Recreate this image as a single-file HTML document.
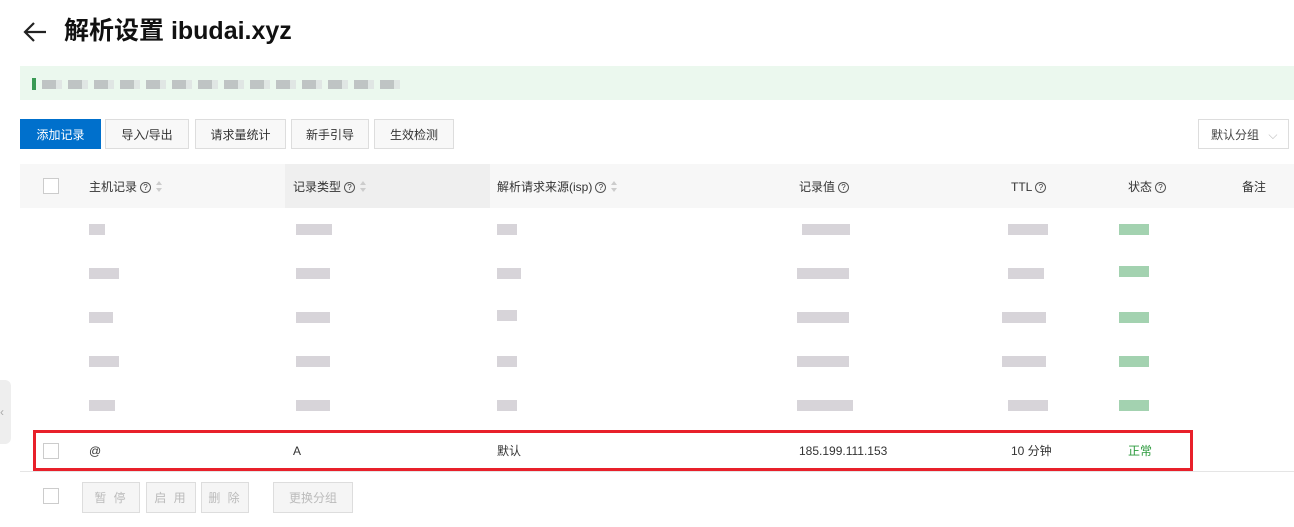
<!DOCTYPE html>
<html><head><meta charset="utf-8"><style>
body{margin:0;width:1294px;height:527px;background:#fff;font-family:"Liberation Sans","Noto Sans CJK SC",sans-serif;position:relative;overflow:hidden;color:#333}
.a{position:absolute}
.t{font-size:12px;color:#333;line-height:14px}
.btn{position:absolute;top:119px;height:30px;border:1px solid #ddd;background:#f8f8f8;font-size:12px;line-height:30px;text-align:center;color:#333;box-sizing:border-box}
.cb{position:absolute;width:14px;height:14px;border:1px solid #ccc;background:#fff}
.q{display:inline-block;width:9px;height:9px;border:1px solid #555;border-radius:50%;font-size:8px;line-height:9px;text-align:center;vertical-align:1px;margin-left:3px}
.s{display:inline-block;width:7px;height:14px;vertical-align:-3px;margin-left:5px;position:relative}
.s:before{content:"";position:absolute;left:0;top:1px;border:3.5px solid transparent;border-bottom:4px solid #ccc;border-top:0}
.s:after{content:"";position:absolute;left:0;top:8px;border:3.5px solid transparent;border-top:4px solid #ccc;border-bottom:0}
.b{position:absolute;height:11px;background:#c9c6cc;opacity:.75}
.g{position:absolute;height:11px;background:#8cc79c;opacity:.8}
.bb{position:absolute;top:482px;height:31px;border:1px solid #ddd;background:#f5f5f5;color:#bbb;font-size:12px;line-height:30px;text-align:center;box-sizing:border-box;letter-spacing:2px}
</style></head><body>
<svg class="a" style="left:22px;top:21px" width="26" height="22" viewBox="0 0 26 22"><path d="M24 11H3M12 2L3 11l9 9" fill="none" stroke="#222" stroke-width="2.2"/></svg>
<div class="a" style="left:64px;top:14px;font-size:25px;font-weight:bold;color:#111;line-height:34px">解析设置 ibudai.xyz</div>
<div class="a" style="left:20px;top:66px;width:1274px;height:34px;background:#ebf8ee"></div>
<div class="a" style="left:32px;top:78px;width:4px;height:12px;background:#3a9a55"></div>
<div class="a" style="left:42px;top:80px;width:360px;height:9px;background:repeating-linear-gradient(90deg,#bfc4c4 0 14px,#e0e6e4 14px 20px,#ebf8ee 20px 26px)"></div>
<div class="btn" style="left:20px;width:81px;background:#0070cc;border-color:#0070cc;color:#fff">添加记录</div>
<div class="btn" style="left:105px;width:84px">导入/导出</div>
<div class="btn" style="left:195px;width:91px">请求量统计</div>
<div class="btn" style="left:291px;width:78px">新手引导</div>
<div class="btn" style="left:374px;width:80px">生效检测</div>
<div class="btn" style="left:1198px;width:91px;background:#fff;color:#444;text-align:left;padding-left:12px">默认分组 <span style="color:#bbb;margin-left:6px">⌵</span></div>
<div class="a" style="left:20px;top:164px;width:1274px;height:44px;background:#f7f7f7"></div>
<div class="a" style="left:285px;top:164px;width:205px;height:44px;background:#efefef"></div>
<div class="cb" style="left:43px;top:178px"></div>
<div class="a t" style="left:89px;top:180px">主机记录<span class="q">?</span><span class="s"></span></div>
<div class="a t" style="left:293px;top:180px">记录类型<span class="q">?</span><span class="s"></span></div>
<div class="a t" style="left:497px;top:180px">解析请求来源(isp)<span class="q">?</span><span class="s"></span></div>
<div class="a t" style="left:799px;top:180px">记录值<span class="q">?</span></div>
<div class="a t" style="left:1011px;top:180px">TTL<span class="q">?</span></div>
<div class="a t" style="left:1128px;top:180px">状态<span class="q">?</span></div>
<div class="a t" style="left:1242px;top:180px">备注</div>
<!-- blurred rows -->
<div class="b" style="left:89px;top:224px;width:16px"></div><div class="b" style="left:296px;top:224px;width:36px"></div><div class="b" style="left:497px;top:224px;width:20px"></div><div class="b" style="left:802px;top:224px;width:48px"></div><div class="b" style="left:1008px;top:224px;width:40px"></div><div class="g" style="left:1119px;top:224px;width:30px"></div>
<div class="b" style="left:89px;top:268px;width:30px"></div><div class="b" style="left:296px;top:268px;width:34px"></div><div class="b" style="left:497px;top:268px;width:24px"></div><div class="b" style="left:797px;top:268px;width:52px"></div><div class="b" style="left:1008px;top:268px;width:36px"></div><div class="g" style="left:1119px;top:266px;width:30px"></div>
<div class="b" style="left:89px;top:312px;width:24px"></div><div class="b" style="left:296px;top:312px;width:34px"></div><div class="b" style="left:497px;top:310px;width:20px"></div><div class="b" style="left:797px;top:312px;width:52px"></div><div class="b" style="left:1002px;top:312px;width:44px"></div><div class="g" style="left:1119px;top:312px;width:30px"></div>
<div class="b" style="left:89px;top:356px;width:30px"></div><div class="b" style="left:296px;top:356px;width:34px"></div><div class="b" style="left:497px;top:356px;width:20px"></div><div class="b" style="left:797px;top:356px;width:52px"></div><div class="b" style="left:1002px;top:356px;width:44px"></div><div class="g" style="left:1119px;top:356px;width:30px"></div>
<div class="b" style="left:89px;top:400px;width:26px"></div><div class="b" style="left:296px;top:400px;width:34px"></div><div class="b" style="left:497px;top:400px;width:20px"></div><div class="b" style="left:797px;top:400px;width:56px"></div><div class="b" style="left:1008px;top:400px;width:40px"></div><div class="g" style="left:1119px;top:400px;width:30px"></div>
<div class="a" style="left:0;top:380px;width:11px;height:64px;background:#eee;border-radius:0 6px 6px 0;color:#aaa;font-size:12px;line-height:64px">‹</div>
<!-- highlighted row -->
<div class="a" style="left:33px;top:430px;width:1154px;height:35px;border:3px solid #e8202a"></div>
<div class="cb" style="left:43px;top:443px"></div>
<div class="a t" style="left:89px;top:444px">@</div>
<div class="a t" style="left:293px;top:444px">A</div>
<div class="a t" style="left:497px;top:444px">默认</div>
<div class="a t" style="left:799px;top:444px">185.199.111.153</div>
<div class="a t" style="left:1011px;top:444px">10 分钟</div>
<div class="a t" style="left:1128px;top:444px;color:#2b9a3c">正常</div>
<div class="a" style="left:20px;top:471px;width:1274px;height:1px;background:#e5e5e5"></div>
<div class="cb" style="left:43px;top:488px"></div>
<div class="bb" style="left:82px;width:58px">暂 停</div>
<div class="bb" style="left:146px;width:50px">启 用</div>
<div class="bb" style="left:201px;width:48px">删 除</div>
<div class="bb" style="left:273px;width:80px;letter-spacing:0">更换分组</div>
</body></html>
